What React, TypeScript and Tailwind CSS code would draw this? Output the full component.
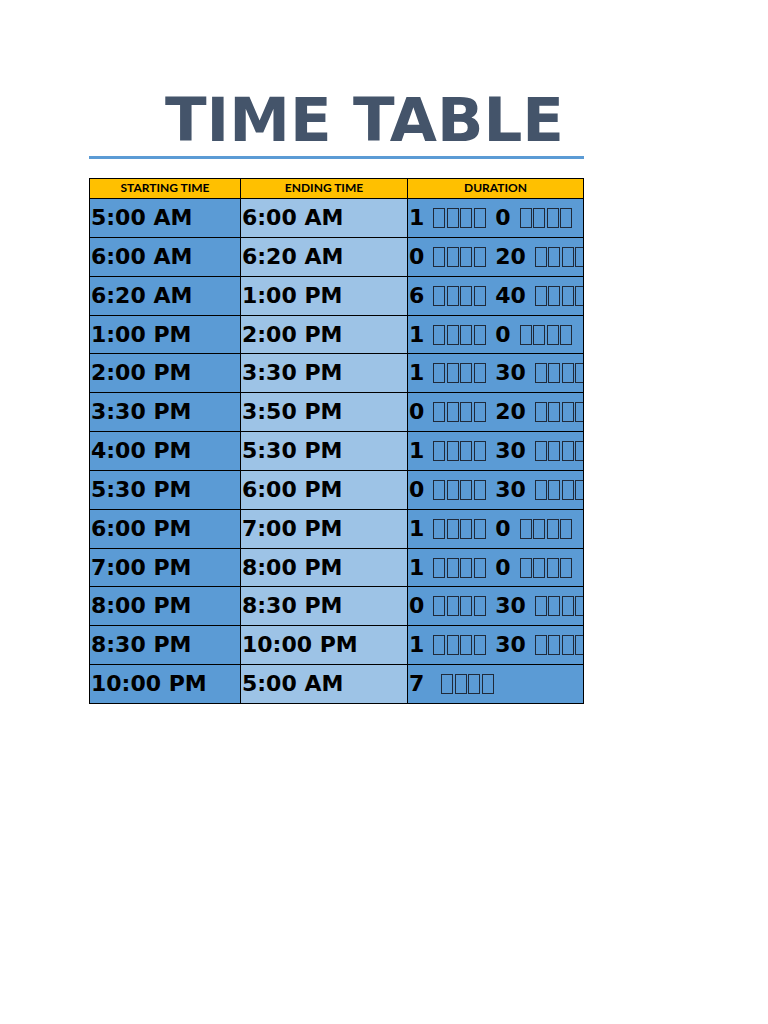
const rows: [string, string, string, string | null][] = [
  ["5:00 AM", "6:00 AM", "1", "0"],
  ["6:00 AM", "6:20 AM", "0", "20"],
  ["6:20 AM", "1:00 PM", "6", "40"],
  ["1:00 PM", "2:00 PM", "1", "0"],
  ["2:00 PM", "3:30 PM", "1", "30"],
  ["3:30 PM", "3:50 PM", "0", "20"],
  ["4:00 PM", "5:30 PM", "1", "30"],
  ["5:30 PM", "6:00 PM", "0", "30"],
  ["6:00 PM", "7:00 PM", "1", "0"],
  ["7:00 PM", "8:00 PM", "1", "0"],
  ["8:00 PM", "8:30 PM", "0", "30"],
  ["8:30 PM", "10:00 PM", "1", "30"],
  ["10:00 PM", "5:00 AM", "7", null],
];

// missing-glyph boxes, as the source font drew them
function Tofu() {
  return (
    <span className="mx-[1.5px] inline-flex gap-[1.5px] align-[-3px]">
      {[0, 1, 2, 3].map((i) => (
        <span key={i} className="inline-block h-[20px] w-[12px] border border-[#1f2a3a]" />
      ))}
    </span>
  );
}

export default function App() {
  return (
    <div className="h-[1024px] w-[768px] bg-white" style={{ fontFamily: "'DejaVu Sans', sans-serif" }}>
      <div className="ml-[89px] w-[495px] pt-[84px]">
        <h1 className="pl-[76px] text-[61px] font-bold leading-[72px] text-[#44546a]">TIME TABLE</h1>
        <div className="h-[3px] bg-[#5b9bd5]" />
        <div className="mt-[19px] border border-black">
          <div
            className="grid h-[19px] grid-cols-[151px_167px_1fr] bg-[#ffc000] text-[12px] font-bold leading-[18px] text-black"
            style={{ fontFamily: "Lato, 'Liberation Sans', sans-serif" }}
          >
            <div className="border-r border-black text-center">STARTING TIME</div>
            <div className="border-r border-black text-center">ENDING TIME</div>
            <div className="text-center">DURATION</div>
          </div>
          {rows.map(([start, end, h, m], i) => (
            <div
              key={i}
              className="grid h-[38.85px] grid-cols-[151px_167px_1fr] border-t border-black text-[22px] font-bold leading-[37px] text-black"
            >
              <div className="overflow-hidden whitespace-nowrap border-r border-black bg-[#5b9bd5] pl-[1px]">{start}</div>
              <div className="overflow-hidden whitespace-nowrap border-r border-black bg-[#9dc3e6] pl-[1px]">{end}</div>
              <div className="overflow-hidden whitespace-pre bg-[#5b9bd5] pl-[1px]">
                {m === null ? `${h}  ` : `${h} `}
                <Tofu />
                {m !== null ? (
                  <>
                    {` ${m} `}
                    <Tofu />
                  </>
                ) : null}
              </div>
            </div>
          ))}
        </div>
      </div>
    </div>
  );
}
